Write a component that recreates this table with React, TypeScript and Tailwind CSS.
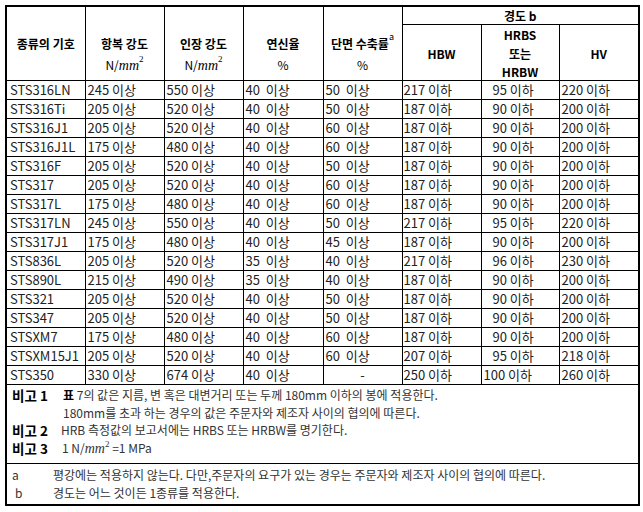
import React from "react";

const rows: string[][] = [
  ["STS316LN", "245", "550", "40", "50", "217", "95", "220"],
  ["STS316Ti", "205", "520", "40", "50", "187", "90", "200"],
  ["STS316J1", "205", "520", "40", "60", "187", "90", "200"],
  ["STS316J1L", "175", "480", "40", "60", "187", "90", "200"],
  ["STS316F", "205", "520", "40", "50", "187", "90", "200"],
  ["STS317", "205", "520", "40", "60", "187", "90", "200"],
  ["STS317L", "175", "480", "40", "60", "187", "90", "200"],
  ["STS317LN", "245", "550", "40", "50", "217", "95", "220"],
  ["STS317J1", "175", "480", "40", "45", "187", "90", "200"],
  ["STS836L", "205", "520", "35", "40", "217", "96", "230"],
  ["STS890L", "215", "490", "35", "40", "187", "90", "200"],
  ["STS321", "205", "520", "40", "50", "187", "90", "200"],
  ["STS347", "205", "520", "40", "50", "187", "90", "200"],
  ["STSXM7", "175", "480", "40", "60", "187", "90", "200"],
  ["STSXM15J1", "205", "520", "40", "60", "207", "95", "218"],
  ["STS350", "330", "674", "40", "-", "250", "100", "260"],
];

const sans = "font-['Noto_Sans_CJK_KR',sans-serif]";

function Unit() {
  return (
    <span className="font-normal">
      N/
      <span className="font-['Liberation_Serif',serif] italic text-[14px] leading-none">mm</span>
      <span className="font-['Liberation_Serif',serif] text-[9px] leading-none align-top relative top-[1px]">2</span>
    </span>
  );
}

function Cell({ children, cls = "" }: { children: React.ReactNode; cls?: string }) {
  return (
    <td className="border border-black p-0 align-middle">
      <div className={`h-[18px] leading-[18px] whitespace-pre overflow-visible ${cls}`}>{children}</div>
    </td>
  );
}

function Label({ children, w }: { children: React.ReactNode; w: string }) {
  return (
    <span className={`${w} shrink-0 font-bold text-black text-[13.5px] leading-[17px]`}>{children}</span>
  );
}

export default function App() {
  const th = "border border-black p-0 align-middle text-center font-bold text-black text-[12px] leading-[21px]";
  return (
    <div className={`w-[643px] h-[512px] bg-white pl-[5px] pt-[5px] ${sans}`}>
      <div className="w-[635px] border-2 border-black">
        <table className="w-[631px] table-fixed border-collapse border-hidden text-[#222]">
          <colgroup>
            <col className="w-[78px]" />
            <col className="w-[79px]" />
            <col className="w-[79px]" />
            <col className="w-[80px]" />
            <col className="w-[79px]" />
            <col className="w-[79px]" />
            <col className="w-[78px]" />
            <col className="w-[79px]" />
          </colgroup>
          <thead>
            <tr>
              <th rowSpan={2} className={th}>종류의 기호</th>
              <th rowSpan={2} className={th}>
                <div className="pt-[21px]">
                  <div>항복 강도</div>
                  <div><Unit /></div>
                </div>
              </th>
              <th rowSpan={2} className={th}>
                <div className="pt-[21px]">
                  <div>인장 강도</div>
                  <div><Unit /></div>
                </div>
              </th>
              <th rowSpan={2} className={th}>
                <div className="pt-[21px]">
                  <div>연신율</div>
                  <div className="font-normal">%</div>
                </div>
              </th>
              <th rowSpan={2} className={th}>
                <div className="pt-[21px]">
                  <div>
                    단면 수축률
                    <span className="text-[9px] font-normal leading-none align-top relative -top-[1px]">a</span>
                  </div>
                  <div className="font-normal">%</div>
                </div>
              </th>
              <th colSpan={3} className={th}>
                <div className="h-[17px] leading-[17px]">경도 b</div>
              </th>
            </tr>
            <tr>
              <th className={th}>
                <div className="h-[55px] pt-[19px] leading-[19px]">HBW</div>
              </th>
              <th className={th}>
                <div className="h-[55px] leading-[19px]">
                  <div>HRBS</div>
                  <div>또는</div>
                  <div className="-mt-[1px]">HRBW</div>
                </div>
              </th>
              <th className={th}>
                <div className="h-[55px] pt-[19px] leading-[19px]">HV</div>
              </th>
            </tr>
          </thead>
          <tbody className="text-[13px]">
            {rows.map((r) => (
              <tr key={r[0]}>
                <Cell cls="pl-[3px]">{r[0]}</Cell>
                <Cell cls="pl-[2px]">{r[1]} 이상</Cell>
                <Cell cls="pl-[2px]">{r[2]} 이상</Cell>
                <Cell cls="pl-[2px]">{r[3]}  이상</Cell>
                {r[4] === "-" ? (
                  <Cell cls="text-center">-</Cell>
                ) : (
                  <Cell cls="pl-[2px]">{r[4]}  이상</Cell>
                )}
                <Cell cls="pl-[1px]">{r[5]} 이하</Cell>
                <Cell cls={r[6].length === 2 ? "pl-[11px]" : "pl-[2px]"}>{r[6]} 이하</Cell>
                <Cell cls="pl-[2px]">{r[7]} 이하</Cell>
              </tr>
            ))}
            <tr>
              <td colSpan={8} className="border border-black p-0 align-top">
                <div className="h-[78px] pt-[1px] pl-[5px] text-[12px] leading-[17.5px] text-[#333]">
                  <div className="flex items-center h-[18px]">
                    <Label w="w-[51px]">비고 1</Label>
                    <span>
                      <b className="text-black">표</b> 7의 값은 지름, 변 혹은 대변거리 또는 두께 180mm 이하의 봉에 적용한다.
                    </span>
                  </div>
                  <div className="flex items-center h-[17px]">
                    <span className="w-[51px] shrink-0" />
                    <span>180mm를 초과 하는 경우의 값은 주문자와 제조자 사이의 협의에 따른다.</span>
                  </div>
                  <div className="flex items-center h-[18px]">
                    <Label w="w-[49px]">비고 2</Label>
                    <span>HRB 측정값의 보고서에는 HRBS 또는 HRBW를 명기한다.</span>
                  </div>
                  <div className="flex items-center h-[18px]">
                    <Label w="w-[50px]">비고 3</Label>
                    <span>
                      1 <Unit /> =1 MPa
                    </span>
                  </div>
                </div>
              </td>
            </tr>
            <tr>
              <td colSpan={8} className="border border-black p-0 align-top">
                <div className="h-[40px] pt-[2px] pl-[5px] text-[12px] leading-[18px] text-[#333]">
                  <div className="flex">
                    <span className="w-[41px] shrink-0">a</span>
                    <span>평강에는 적용하지 않는다. 다만,주문자의 요구가 있는 경우는 주문자와 제조자 사이의 협의에 따른다.</span>
                  </div>
                  <div className="flex">
                    <span className="w-[41px] shrink-0 pl-[3px]">b</span>
                    <span>경도는 어느 것이든 1종류를 적용한다.</span>
                  </div>
                </div>
              </td>
            </tr>
          </tbody>
        </table>
      </div>
    </div>
  );
}
